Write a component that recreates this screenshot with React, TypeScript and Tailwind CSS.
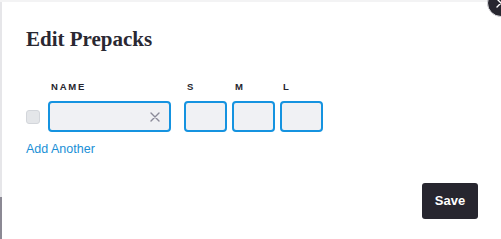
import React from "react";

function XIcon({ className, stroke }: { className?: string; stroke: string }) {
  return (
    <svg className={className} viewBox="0 0 10 10" fill="none">
      <path d="M1 1L9 9M9 1L1 9" stroke={stroke} strokeWidth="1.4" strokeLinecap="round" />
    </svg>
  );
}

function SizeField({ label }: { label: string }) {
  return (
    <div className="flex flex-col">
      <div className="h-[12px] pl-[3px] text-[9.5px] leading-[12px] font-bold tracking-[1.8px] text-[#26252e]">{label}</div>
      <div className="mt-[8px] h-[31px] w-[43px] rounded-[4px] border-2 border-[#1593e0] bg-[#f0f1f4]" />
    </div>
  );
}

export default function App() {
  return (
    <div className="relative h-[239px] w-[501px] overflow-hidden bg-[#f3f3f4] pt-[2px]" style={{ fontFamily: '"Liberation Sans", Arial, sans-serif' }}>
      <div className="flex h-[237px]">
        <div className="flex w-[2px] flex-col">
          <div className="h-[195px] bg-[#e6e6e9]" />
          <div className="flex-1 bg-[#8b8994]" />
        </div>
        <div className="relative flex-1 bg-white pl-[24px] pr-[23px] pt-[25px]">
          <h1
            className="text-[21px] leading-[24px] font-bold text-[#2a2832]"
            style={{ fontFamily: '"Liberation Serif", "Times New Roman", serif' }}
          >
            Edit Prepacks
          </h1>
          <div className="mt-[30px] flex items-end">
            <div className="mb-[8px] h-[14px] w-[14px] rounded-[3px] border border-[#d3d6db] bg-[#e4e6e9]" />
            <div className="ml-[8px] flex flex-col">
              <div className="h-[12px] pl-[3px] text-[9.5px] leading-[12px] font-bold tracking-[1.8px] text-[#26252e]">NAME</div>
              <div className="mt-[8px] flex h-[31px] w-[123px] items-center justify-end rounded-[4px] border-2 border-[#1593e0] bg-[#f0f1f4] pr-[9px]">
                <XIcon className="h-[10px] w-[10px]" stroke="#8b8a99" />
              </div>
            </div>
            <div className="ml-[13px] flex gap-[5px]">
              <SizeField label="S" />
              <SizeField label="M" />
              <SizeField label="L" />
            </div>
          </div>
          <div className="mt-[9px] text-[12.5px] leading-[16px] text-[#1a8fd6]">Add Another</div>
          <div className="mt-[26px] flex justify-end">
            <button className="flex h-[36px] w-[56px] items-center justify-center rounded-[3px] bg-[#27262f] text-[13px] font-bold text-white">
              Save
            </button>
          </div>
          <div className="absolute left-[485px] top-[-13px] flex h-[28px] w-[28px] items-center justify-center rounded-full border border-[#d9d9dd] bg-[#27262f]">
            <XIcon className="h-[10px] w-[10px]" stroke="#ffffff" />
          </div>
        </div>
      </div>
    </div>
  );
}
